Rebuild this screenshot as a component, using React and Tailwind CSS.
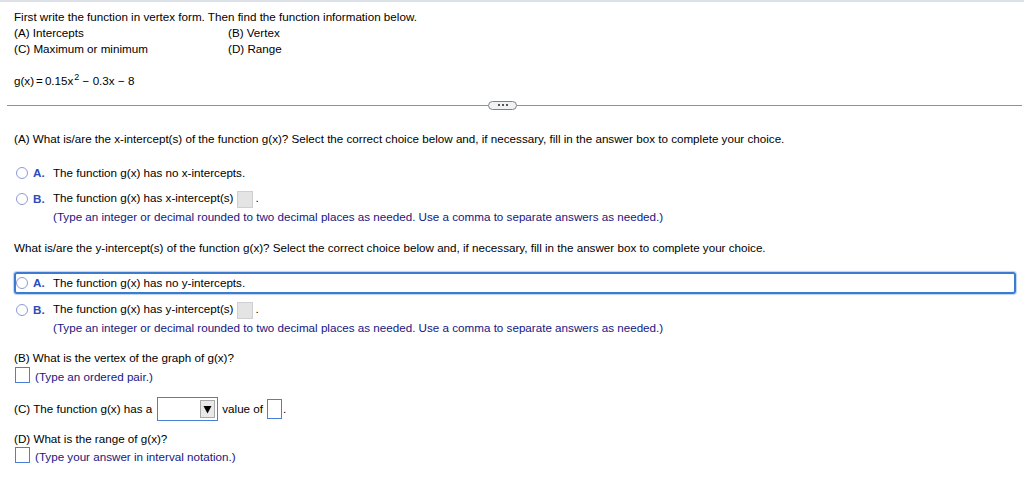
import React from "react";

const Radio = () => (
  <span className="inline-block w-[12px] h-[12px] rounded-full border border-[#8a9ad8] bg-white shrink-0" />
);

const Option = ({ letter, children, selected }) => (
  <div
    className={
      selected
        ? "flex items-center h-[22px] w-[1002px] border-2 border-[#3d7bd0] rounded-[3px] shadow-[0_0_1px_1px_#bcd3f0] pl-[0px]"
        : "flex items-center h-[16px] pl-[2px]"
    }
  >
    <Radio />
    <span className="ml-[5px] w-[20px] font-bold text-[#2d4bb8]">{letter}.</span>
    <span>{children}</span>
  </div>
);

const GrayBox = () => (
  <span className="inline-block align-middle w-[16px] h-[17px] bg-[#e4e4e4] border border-[#cfcfcf] mx-[3px]" />
);

const EmptyBox = ({ h = "h-[16px]" }) => (
  <span className={`inline-block w-[15px] ${h} bg-white border border-[#4a7fd6] shrink-0`} />
);

export default function App() {
  return (
    <div className="w-[1024px] h-[479px] bg-white border-t-2 border-[#dde1e8] overflow-hidden text-[11.65px] text-black font-['Liberation_Sans',Arial,sans-serif] leading-[16px]">
      <div className="pl-[14px] pt-[7px]">
        <div>First write the function in vertex form. Then find the function information below.</div>
        <div className="flex">
          <span className="w-[214px]">(A) Intercepts</span>
          <span>(B) Vertex</span>
        </div>
        <div className="flex">
          <span className="w-[214px]">(C) Maximum or minimum</span>
          <span>(D) Range</span>
        </div>
        <div className="mt-[16px]">
          g(x)<span className="mx-[2px]">=</span>0.15x<sup className="text-[9px] relative top-[-5px] ml-[1px]">2</sup> − 0.3x − 8
        </div>
      </div>

      <div className="mt-[11px] h-[10px] ml-[7px] mr-[2px] flex items-center">
        <div className="w-[481px] h-px bg-[#8c929c]" />
        <div className="w-[29px] h-[9px] rounded-full border border-[#7d838c] bg-[#f1f2f4] flex items-center justify-center gap-[2px]">
          <span className="w-[2px] h-[2px] bg-[#555]" />
          <span className="w-[2px] h-[2px] bg-[#555]" />
          <span className="w-[2px] h-[2px] bg-[#555]" />
        </div>
        <div className="flex-1 h-px bg-[#8c929c]" />
      </div>

      <div className="pl-[14px]">
        <div className="mt-[21px]">
          (A) What is/are the x-intercept(s) of the function g(x)? Select the correct choice below and, if necessary, fill in the answer box to complete your choice.
        </div>
        <div className="mt-[18px]">
          <Option letter="A">The function g(x) has no x-intercepts.</Option>
        </div>
        <div className="mt-[10px]">
          <Option letter="B">
            The function g(x) has x-intercept(s)
            <GrayBox />.
          </Option>
        </div>
        <div className="mt-[2px] pl-[39px] text-[#161682]">
          (Type an integer or decimal rounded to two decimal places as needed. Use a comma to separate answers as needed.)
        </div>

        <div className="mt-[15px]">
          What is/are the y-intercept(s) of the function g(x)? Select the correct choice below and, if necessary, fill in the answer box to complete your choice.
        </div>
        <div className="mt-[16px]">
          <Option letter="A" selected>The function g(x) has no y-intercepts.</Option>
        </div>
        <div className="mt-[8px]">
          <Option letter="B">
            The function g(x) has y-intercept(s)
            <GrayBox />.
          </Option>
        </div>
        <div className="mt-[2px] pl-[39px] text-[#161682]">
          (Type an integer or decimal rounded to two decimal places as needed. Use a comma to separate answers as needed.)
        </div>

        <div className="mt-[14px]">(B) What is the vertex of the graph of g(x)?</div>
        <div className="mt-[3px] flex items-center h-[16px]">
          <span className="ml-[1px]"><EmptyBox /></span>
          <span className="ml-[5px] text-[#161682]">(Type an ordered pair.)</span>
        </div>

        <div className="mt-[12px] flex items-center h-[24px]">
          <span>(C) The function g(x) has a</span>
          <span className="ml-[5px] w-[61px] h-[24px] border border-[#4a7fd6] bg-white flex items-center justify-end pr-[2px]">
            <span className="w-[15px] h-[18px] bg-[#e9e9e9] border border-[#a8a8a8] flex items-center justify-center">
              <svg width="9" height="9" viewBox="0 0 9 9">
                <path d="M0.5 1 L8.5 1 L4.5 8.5 Z" fill="#000" />
              </svg>
            </span>
          </span>
          <span className="ml-[4px]">value of</span>
          <span className="ml-[4px] flex items-center"><EmptyBox h="h-[20px]" /></span>
          <span className="ml-[1px]">.</span>
        </div>

        <div className="mt-[10px]">(D) What is the range of g(x)?</div>
        <div className="mt-[2px] flex items-center h-[16px]">
          <span className="ml-[1px]"><EmptyBox /></span>
          <span className="ml-[5px] text-[#161682]">(Type your answer in interval notation.)</span>
        </div>
      </div>
    </div>
  );
}
